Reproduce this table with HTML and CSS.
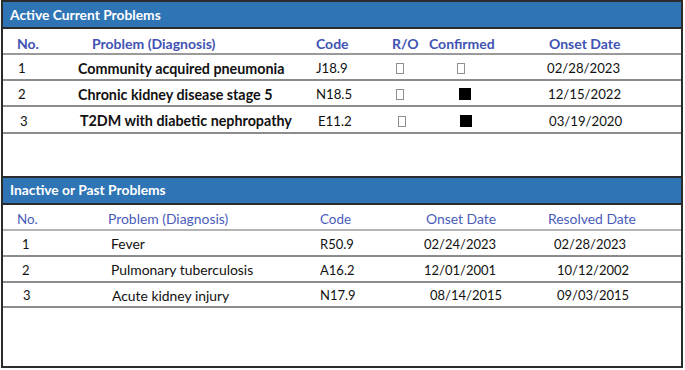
FILE: index.html
```html
<!DOCTYPE html>
<html lang="en">
<head>
<meta charset="utf-8">
<title>Problem List</title>
<link rel="stylesheet" href="styles.css">
</head>
<body>
<div class="frame">
  <section class="sec sec-active">
    <div class="bar">Active Current Problems</div>
    <div class="grid g-active head">
      <div class="c1">No.</div>
      <div class="c2 hp">Problem (Diagnosis)</div>
      <div class="c3">Code</div>
      <div class="c4">R/O</div>
      <div class="c5">Confirmed</div>
      <div class="c6 ho">Onset Date</div>
    </div>
    <div class="grid g-active row">
      <div class="c1 n">1</div>
      <div class="c2 b">Community acquired pneumonia</div>
      <div class="c3">J18.9</div>
      <div class="c4"><span class="box"></span></div>
      <div class="c5"><span class="box box-c"></span></div>
      <div class="c6">02/28/2023</div>
    </div>
    <div class="grid g-active row">
      <div class="c1 n">2</div>
      <div class="c2 b">Chronic kidney disease stage 5</div>
      <div class="c3">N18.5</div>
      <div class="c4"><span class="box"></span></div>
      <div class="c5"><span class="fill"></span></div>
      <div class="c6 d1">12/15/2022</div>
    </div>
    <div class="grid g-active row row-tall">
      <div class="c1 n s2">3</div>
      <div class="c2 b s2">T2DM with diabetic nephropathy</div>
      <div class="c3 s2">E11.2</div>
      <div class="c4"><span class="box s2"></span></div>
      <div class="c5"><span class="fill s1"></span></div>
      <div class="c6 d2">03/19/2020</div>
    </div>
  </section>
  <section class="sec sec-past">
    <div class="bar bar2">Inactive or Past Problems</div>
    <div class="grid g-past head head2">
      <div class="p1">No.</div>
      <div class="p2 w">Problem (Diagnosis)</div>
      <div class="p3">Code</div>
      <div class="p4 h4 w">Onset Date</div>
      <div class="p5 w">Resolved Date</div>
    </div>
    <div class="grid g-past row row2">
      <div class="p1 dn">1</div>
      <div class="p2 dp w">Fever</div>
      <div class="p3">R50.9</div>
      <div class="p4">02/24/2023</div>
      <div class="p5 r1">02/28/2023</div>
    </div>
    <div class="grid g-past row row2">
      <div class="p1 dn">2</div>
      <div class="p2 dp w">Pulmonary tuberculosis</div>
      <div class="p3">A16.2</div>
      <div class="p4">12/01/2001</div>
      <div class="p5 r2">10/12/2002</div>
    </div>
    <div class="grid g-past row row2 row-short">
      <div class="p1 dn dn3">3</div>
      <div class="p2 dp dp3 w">Acute kidney injury</div>
      <div class="p3">N17.9</div>
      <div class="p4 o3">08/14/2015</div>
      <div class="p5 r2">09/03/2015</div>
    </div>
  </section>
</div>
</body>
</html>
```

FILE: styles.css
```css
* { box-sizing: border-box; }
html, body { margin: 0; padding: 0; background: #ffffff; }
body {
  font-family: Lato, "Liberation Sans", Arial, sans-serif;
  color: #111;
  width: 685px;
  height: 370px;
  overflow: hidden;
}
.frame {
  margin-left: 1px;
  width: 682px;
  height: 368px;
  border: 2px solid #2b2b2b;
  display: flex;
  flex-direction: column;
}
.sec-active { height: 174px; }
.sec-past { flex: 1; border-top: 2px solid #2b2b2b; }
.bar {
  height: 27px;
  background: #2f75b5;
  border-bottom: 2px solid #2b2b2b;
  color: #fff;
  font-weight: 700;
  font-size: 13.8px;
  padding: 3px 0 0 7px;
  line-height: 20px;
}
.bar2 { padding-top: 2px; }
.grid {
  display: grid;
  align-items: center;
  font-size: 13.2px;
}
.g-active { grid-template-columns: 75px 238px 76px 37px 118px 1fr; }
.g-past { grid-template-columns: 105px 212px 104px 124px 1fr; }
.head {
  height: 26px;
  border-bottom: 2px solid #9a9a9a;
  color: #4052b4;
  font-weight: 700;
  font-size: 14px;
  padding-top: 4px;
}
.head2 {
  font-weight: 400;
  color: #4a5cbb;
  font-size: 13.4px;
  border-bottom-color: #b4b4b4;
  padding-top: 3px;
}
.row {
  height: 26px;
  border-bottom: 2px solid #8c8c8c;
  padding-top: 2px;
}
.row-tall { height: 27px; }
.row2 { height: 26px; padding-top: 1px; font-size: 13px; }
.row-short { height: 25px; }
.w { font-size: 13.9px; }
.c1 { padding-left: 14px; }
.c2.hp { padding-left: 14px; }
.c6.ho { padding-left: 2px; }
.n { padding-left: 15px; }
.b { font-weight: 700; font-size: 14.3px; }
.c4 { padding-left: 0; }
.c4 .box { margin-left: 4px; }
.c5 .box-c { margin-left: 28px; }
.c5 .fill { margin-left: 30px; }
.s2 { position: relative; left: 2px; }
.s1 { position: relative; left: 1px; }
.d1 { padding-left: 1px; }
.d2 { padding-left: 2px; }
.box {
  display: block;
  width: 8px;
  height: 11px;
  border: 1.5px solid #8f8f8f;
  margin-top: 1px;
}
.fill {
  display: block;
  width: 12px;
  height: 12px;
  background: #000;
}
.p1 { padding-left: 14px; }
.dn { padding-left: 19px; }
.dn3 { padding-left: 20px; }
.dp { padding-left: 3px; }
.dp3 { padding-left: 4px; }
.h4 { padding-left: 2px; }
.o3 { padding-left: 6px; }
.r1 { padding-left: 6px; }
.r2 { padding-left: 9px; }
```
